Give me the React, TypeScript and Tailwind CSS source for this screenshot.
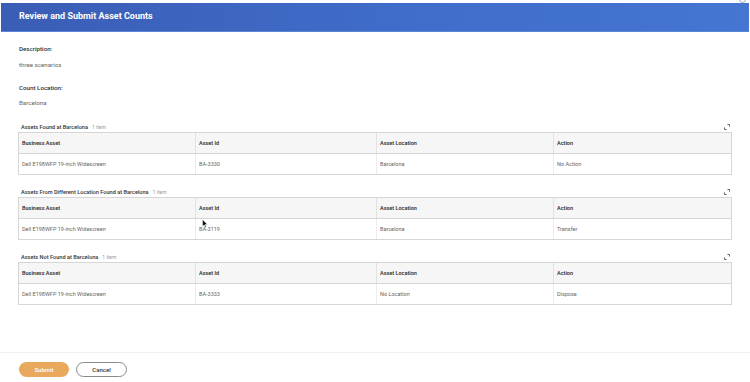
import React from "react";

type Row = { asset: string; id: string; location: string; action: string };

const sections: { title: string; row: Row }[] = [
  {
    title: "Assets Found at Barcelona",
    row: { asset: "Dell E198WFP 19-inch Widescreen", id: "BA-3330", location: "Barcelona", action: "No Action" },
  },
  {
    title: "Assets From Different Location Found at Barcelona",
    row: { asset: "Dell E198WFP 19-inch Widescreen", id: "BA-3119", location: "Barcelona", action: "Transfer" },
  },
  {
    title: "Assets Not Found at Barcelona",
    row: { asset: "Dell E198WFP 19-inch Widescreen", id: "BA-3333", location: "No Location", action: "Dispose" },
  },
];

function ExpandIcon() {
  return (
    <svg width="6" height="6" viewBox="0 0 7 7" fill="none" stroke="#555" strokeWidth="1.1">
      <path d="M4 0.5h2.5v2.5" />
      <path d="M0.5 4v2.5h2.5" />
    </svg>
  );
}

function Cursor() {
  return (
    <svg width="6" height="9" viewBox="0 0 6 9" className="absolute left-[202px] top-[219px]">
      <path d="M0.5 0.5v7l1.7-1.6 1.2 2.6 1-.5-1.2-2.5h2.3z" fill="#111" stroke="#fff" strokeWidth="0.5" />
    </svg>
  );
}

function AssetTable({ title, row }: { title: string; row: Row }) {
  return (
    <div>
      <div className="flex h-[10px] items-center justify-between pl-[3px] pr-[2px]">
        <div className="text-[5.6px] font-medium text-[#333]">
          {title}
          <span className="ml-[4px] text-[5px] font-normal text-[#999]">1 item</span>
        </div>
        <ExpandIcon />
      </div>
      <div className="border border-[#d6d6d6]">
        <div className="grid h-[21px] grid-cols-[176px_181px_177px_1fr] items-center border-b border-[#d6d6d6] bg-[#f6f6f6] text-[5.5px] font-semibold text-[#333]">
          <div className="flex h-full items-center pl-[3px]">Business Asset</div>
          <div className="flex h-full items-center border-l border-[#e2e2e2] pl-[3px]">Asset Id</div>
          <div className="flex h-full items-center border-l border-[#e2e2e2] pl-[3px]">Asset Location</div>
          <div className="flex h-full items-center border-l border-[#e2e2e2] pl-[3px]">Action</div>
        </div>
        <div className="grid h-[20px] grid-cols-[176px_181px_177px_1fr] items-center text-[5.5px] text-[#666]">
          <div className="flex h-full items-center pl-[3px]">{row.asset}</div>
          <div className="flex h-full items-center border-l border-[#ececec] pl-[3px]">{row.id}</div>
          <div className="flex h-full items-center border-l border-[#ececec] pl-[3px]">{row.location}</div>
          <div className="flex h-full items-center border-l border-[#ececec] pl-[3px]">{row.action}</div>
        </div>
      </div>
    </div>
  );
}

export default function App() {
  return (
    <div
      className="relative flex h-[382px] w-[750px] flex-col overflow-hidden bg-white"
      style={{ fontFamily: "Roboto, 'Liberation Sans', sans-serif" }}
    >
      <div className="absolute right-[4px] top-[-4px] h-[7px] w-[7px] rounded-full border border-[#9aa6c4]" />
      <div className="h-[3px]" />
      <header className="mx-[1px] flex h-[29px] items-center border-b border-[#5a86d6] bg-gradient-to-r from-[#3a5db5] via-[#3f6cc8] to-[#4576d2] pl-[18px]">
        <h1 className="text-[9px] font-bold text-white">Review and Submit Asset Counts</h1>
      </header>

      <main className="flex-1 px-[18px]">
        <div className="mt-[12px] pl-[1px] text-[6.2px] leading-[10px]">
          <div className="font-medium text-[#333]">Description:</div>
          <div className="mt-[6px] text-[#666]">three scenarios</div>
          <div className="mt-[13px] font-medium text-[#333]">Count Location:</div>
          <div className="mt-[5px] text-[#666]">Barcelona</div>
        </div>

        <div className="mt-[14px] flex flex-col gap-[12px]">
          {sections.map((s) => (
            <AssetTable key={s.title} title={s.title} row={s.row} />
          ))}
        </div>
      </main>

      <footer className="flex h-[30px] gap-[7px] border-t border-[#f0f0f0] px-[19px] pt-[9px]">
        <button className="h-[15px] w-[50px] rounded-full bg-[#e8a95c] text-[6px] font-medium text-white">
          Submit
        </button>
        <button className="h-[15px] w-[51px] rounded-full border border-[#8a8a8a] bg-white text-[6px] font-medium text-[#333]">
          Cancel
        </button>
      </footer>

      <Cursor />
    </div>
  );
}
